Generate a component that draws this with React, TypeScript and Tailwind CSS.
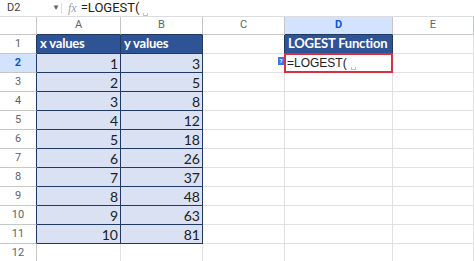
import React from "react";

const COLS = ["A", "B", "C", "D", "E"];
const xs = [1, 2, 3, 4, 5, 6, 7, 8, 9, 10];
const ys = [3, 5, 8, 12, 18, 26, 37, 48, 63, 81];

const calibri = { fontFamily: "Lato, 'Open Sans', sans-serif" };

export default function App() {
  const rows = Array.from({ length: 12 }, (_, i) => i + 1);
  const head = "bg-[#2f5496] text-white font-bold pl-[3px] text-[13px] tracking-[-0.2px] whitespace-nowrap overflow-hidden border-[#1f3864]";
  const data = "bg-[#d9e1f2] justify-end pr-[2px] text-[14px] border-[#1f3864]";
  return (
    <div className="w-[474px] h-[261px] overflow-hidden bg-white font-['Roboto',sans-serif] text-[#202124]">
      {/* formula bar */}
      <div className="h-[17px] flex items-center border-b border-[#dadce0] text-[11px]">
        <div className="w-[52px] pl-[7px] text-[#3c4043]">D2</div>
        <div className="w-[8px] text-[8px] text-[#5f6368]">▼</div>
        <div className="w-px h-[11px] bg-[#dadce0] ml-[1px]" />
        <div className="ml-[6px] italic text-[#9aa0a6] font-['Liberation_Serif',serif] text-[12px]">fx</div>
        <div className="ml-[4px] text-[13px] text-[#202124] flex items-end">
          =LOGEST(
          <span className="ml-[3px] mb-[2px] w-[5px] h-[3px] border-b border-l border-r border-[#bdc1c6]" />
        </div>
      </div>
      {/* grid */}
      <div className="grid grid-cols-[37px_84px_82px_82px_108px_81px] grid-rows-[18px_repeat(12,19px)]">
        <div className="border-r border-b border-[#c4c7c5] bg-white" />
        {COLS.map((c) => (
          <div
            key={c}
            className={`flex items-center justify-center text-[11px] border-r border-b ${
              c === "D"
                ? "bg-[#d3e3fd] font-bold text-[#0b57d0] border-r-[#c4c7c5] border-b-[#1f3864]"
                : c === "A" || c === "B"
                ? "bg-white text-[#5f6368] border-r-[#c4c7c5] border-b-[#1f3864]"
                : "bg-white text-[#5f6368] border-[#c4c7c5]"
            }`}
          >
            {c}
          </div>
        ))}
        {rows.map((r) => (
          <React.Fragment key={r}>
            <div
              className={`flex items-center justify-center text-[11px] border-b border-r ${
                r === 2 ? "bg-[#d3e3fd] font-bold text-[#0b57d0]" : "bg-white text-[#5f6368]"
              } ${r <= 11 ? "border-r-[#1f3864] border-b-[#c4c7c5]" : "border-[#c4c7c5]"}`}
            >
              {r}
            </div>
            {/* A */}
            <div
              className={`flex items-center border-r border-b ${
                r === 1 ? head : r <= 11 ? data : "border-[#e1e1e1]"
              }`}
              style={calibri}
            >
              {r === 1 ? "x values" : r <= 11 ? xs[r - 2] : ""}
            </div>
            {/* B */}
            <div
              className={`flex items-center border-r border-b ${
                r === 1 ? head : r <= 11 ? data : "border-[#e1e1e1]"
              }`}
              style={calibri}
            >
              {r === 1 ? "y values" : r <= 11 ? ys[r - 2] : ""}
            </div>
            {/* C */}
            <div
              className={`relative border-b border-r ${
                r === 1 ? "border-r-[#1f3864] border-b-[#e1e1e1]" : "border-[#e1e1e1]"
              }`}
            >
              {r === 2 && (
                <div className="absolute right-[0px] top-[3px] w-[6px] h-[8px] bg-[#3b78e7] text-white text-[6px] leading-[8px] text-center font-bold">
                  ?
                </div>
              )}
            </div>
            {/* D */}
            <div
              className={`relative flex items-center border-r border-b ${
                r === 1 ? head : "border-[#e1e1e1]"
              }`}
              style={r === 1 ? calibri : undefined}
            >
              {r === 1 && "LOGEST Function"}
              {r === 2 && (
                <>
                  <div className="absolute -left-[1px] -top-[1px] right-[-1px] bottom-[-1px] border-2 border-[#d93040]" />
                  <div className="relative flex items-end pl-[2px] text-[12px] text-[#202124] font-['Liberation_Sans',sans-serif]">
                    =LOGEST(
                    <span className="ml-[4px] mb-[2px] w-[5px] h-[3px] border-b border-l border-r border-[#bdc1c6]" />
                  </div>
                </>
              )}
            </div>
            {/* E */}
            <div className="border-r border-b border-[#e1e1e1]" />
          </React.Fragment>
        ))}
      </div>
    </div>
  );
}
